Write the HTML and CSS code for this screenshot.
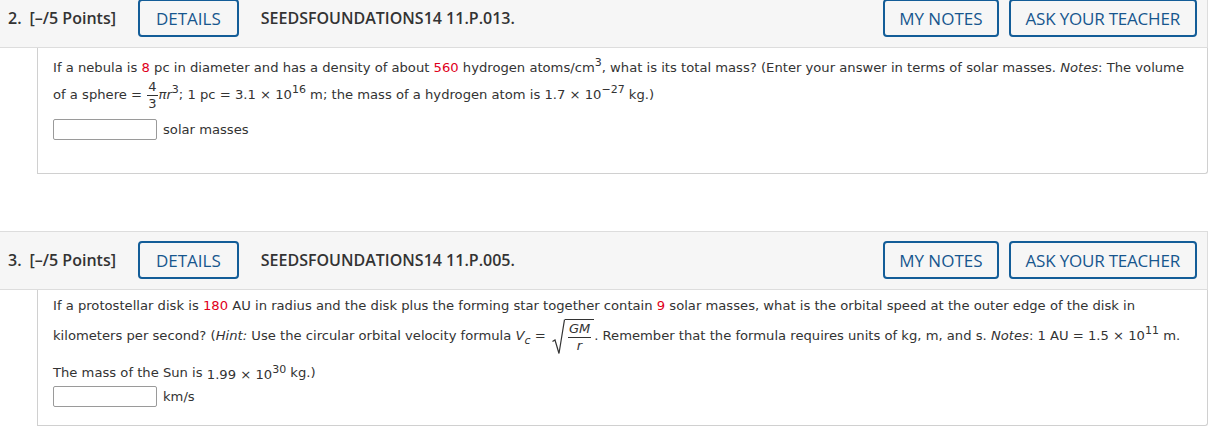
FILE: index.html
```html
<!DOCTYPE html>
<html lang="en">
<head>
<meta charset="utf-8">
<title>Questions</title>
<link rel="stylesheet" href="styles.css">
</head>
<body>
<div class="page">
  <section class="q q2">
    <div class="qhead">
      <span class="num">2.</span>
      <span class="pts">[&ndash;/5 Points]</span>
      <button class="btn">DETAILS</button>
      <span class="code">SEEDSFOUNDATIONS14 11.P.013.</span>
      <span class="spacer"></span>
      <button class="btn btn-notes">MY NOTES</button>
      <button class="btn btn-ask">ASK YOUR TEACHER</button>
    </div>
    <div class="qbody">
      <p class="text">If a nebula is <span class="red">8</span> pc in diameter and has a density of about <span class="red">560</span> hydrogen atoms/cm<sup>3</sup>, what is its total mass? (Enter your answer in terms of solar masses. <i>Notes</i>: The volume<br>of a sphere = <span class="frac"><span class="fn">4</span><span class="fd">3</span></span><i class="pi">&pi;r</i><sup>3</sup>; 1 pc = 3.1 &times; 10<sup>16</sup> m; the mass of a hydrogen atom is 1.7 &times; 10<sup>&minus;27</sup> kg.)</p>
      <div class="answer"><span class="field"></span><span class="unit">solar masses</span></div>
    </div>
  </section>

  <section class="q q3">
    <div class="qhead">
      <span class="num">3.</span>
      <span class="pts">[&ndash;/5 Points]</span>
      <button class="btn">DETAILS</button>
      <span class="code">SEEDSFOUNDATIONS14 11.P.005.</span>
      <span class="spacer"></span>
      <button class="btn btn-notes">MY NOTES</button>
      <button class="btn btn-ask">ASK YOUR TEACHER</button>
    </div>
    <div class="qbody">
      <p class="text">If a protostellar disk is <span class="red">180</span> AU in radius and the disk plus the forming star together contain <span class="red">9</span> solar masses, what is the orbital speed at the outer edge of the disk in<br>kilometers per second? (<i>Hint:</i> Use the circular orbital velocity formula <i>V</i><sub><i>c</i></sub> = <span class="sqrt"><svg class="rad" width="13" height="36" viewBox="0 0 13 36"><path d="M0.5 22.5 L3 21 L7 34.5 L12.5 0.5" fill="none" stroke="#333" stroke-width="1.2"/></svg><span class="frac under"><span class="fn"><i>GM</i></span><span class="fd"><i>r</i></span></span></span>. Remember that the formula requires units of kg, m, and s. <i>Notes</i>: 1 AU = 1.5 &times; 10<sup>11</sup> m.</p>
      <p class="text l3">The mass of the Sun is <span class="mth">1.99 &times; 10<sup>30</sup></span> kg.)</p>
      <div class="answer"><span class="field"></span><span class="unit">km/s</span></div>
    </div>
  </section>
</div>
</body>
</html>
```

FILE: styles.css
```css
html, body {
  margin: 0;
  padding: 0;
  background: #ffffff;
}

.page {
  width: 1208px;
  margin-top: -11px;
}

.q {
  display: flex;
  flex-direction: column;
}

.q3 {
  margin-top: 57px;
}

.qhead {
  display: flex;
  align-items: center;
  height: 38px;
  padding: 9px 10px 10px 8px;
  background: #f6f6f6;
  border: 1px solid #dddddd;
  border-left: none;
  font-family: "Open Sans", sans-serif;
  color: #333333;
}

.num {
  font-weight: 600;
  font-size: 16px;
  margin-right: 8px;
}

.pts {
  font-weight: 600;
  font-size: 16px;
  margin-right: 22px;
}

.code {
  font-weight: 600;
  font-size: 16px;
  margin-left: 22px;
}

.spacer {
  flex: 1;
}

.btn {
  height: 38px;
  box-sizing: border-box;
  padding: 0 16px;
  background: transparent;
  border: 2px solid #135d98;
  border-radius: 4px;
  font-family: "Open Sans", sans-serif;
  font-size: 17px;
  font-weight: 400;
  color: #17568e;
}

.btn-notes {
  padding: 0 14px;
}

.btn-ask {
  padding: 0 15px;
  letter-spacing: -0.2px;
}

.btn + .btn {
  margin-left: 10px;
}

.qbody {
  margin-left: 37px;
  border: 1px solid #d0d0d0;
  border-top: none;
  border-bottom-right-radius: 3px;
  padding: 6px 15px 33px 15px;
  font-family: "DejaVu Sans", sans-serif;
  font-size: 13.15px;
  color: #333333;
}

.q3 .qbody {
  padding-top: 1px;
  padding-bottom: 18px;
}

.text {
  margin: 0;
  line-height: 27px;
}

.q3 .text {
  line-height: 30px;
}

.q3 .text.l3 {
  margin-top: 9px;
  line-height: 26px;
}

.red {
  color: #e0001b;
}

sup {
  font-size: 11px;
  line-height: 0;
  vertical-align: 6px;
}

sub {
  font-size: 11px;
  line-height: 0;
  vertical-align: -4px;
}

.frac {
  display: inline-flex;
  flex-direction: column;
  align-items: center;
  vertical-align: middle;
  line-height: 14px;
  font-size: 13px;
  margin: -3px 1px;
}

.frac .fn {
  border-bottom: 1px solid #333333;
  padding: 0 1px 1px 1px;
}

.frac .fd {
  padding-top: 1px;
}

.pi {
  font-style: italic;
}

.sqrt {
  display: inline-flex;
  align-items: flex-start;
  vertical-align: middle;
  line-height: 13px;
  margin: -4px 0 -4px 2px;
}

.rad {
  display: block;
}

.frac.under {
  border-top: 1px solid #333333;
  margin: 0.5px 0 0 0;
  padding: 2px 3px 0 3px;
  font-size: 13px;
}

.mth {
  position: relative;
  top: 2px;
}

.answer {
  display: flex;
  align-items: center;
  margin-top: 11px;
}

.q3 .answer {
  margin-top: 0;
}

.field {
  width: 102px;
  height: 19px;
  border: 1px solid #9a9a9a;
  border-radius: 2px;
  background: #ffffff;
}

.unit {
  margin-left: 6px;
}
```
